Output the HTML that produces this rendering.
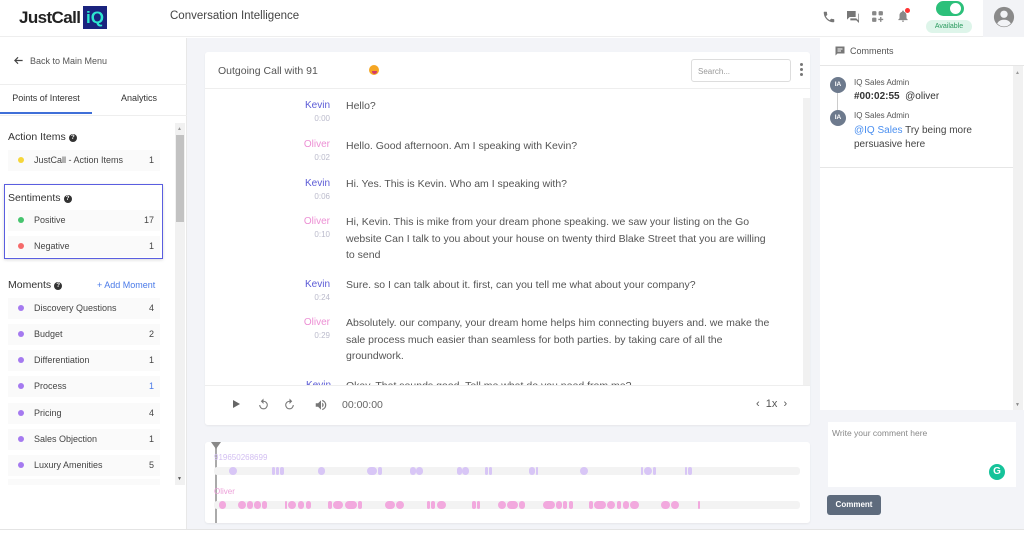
<!DOCTYPE html>
<html><head><meta charset="utf-8"><style>
*{box-sizing:border-box;margin:0;padding:0}
body{width:1024px;height:553px;overflow:hidden;background:#fff;font-family:"Liberation Sans",sans-serif;color:#444;position:relative;font-size:10px}
.a{position:absolute}
.hdr{left:0;top:0;width:1024px;height:37px;background:#fff;border-bottom:1px solid #eee}
.side{left:0;top:38px;width:187px;height:491px;background:#fff;border-right:1px solid #e8e8e8}
.main{left:187px;top:38px;width:632px;height:491px;background:#f3f4f8}
.card{background:#fff;border-radius:3px;box-shadow:0 1px 2px rgba(0,0,0,.06)}
.item{position:absolute;left:8px;width:152px;height:21px;background:#fafafa;font-size:9px;color:#444}
.item .d{position:absolute;left:10px;top:7px;width:6px;height:6px;border-radius:50%}
.item .t{position:absolute;left:26px;top:5px}
.item .n{position:absolute;right:6px;top:5px}
.q{display:inline-block;width:8px;height:8px;border-radius:50%;background:#333;color:#fff;font-size:6px;text-align:center;line-height:8px;font-weight:bold;vertical-align:1px;margin-left:3px}
.nm{position:absolute;right:694px;text-align:right;font-size:10px}
.tm{position:absolute;right:694px;text-align:right;font-size:8px;color:#bbc}
.tx{position:absolute;left:346px;width:430px;font-size:10.5px;color:#555;line-height:16.5px}
.pl{position:absolute;height:8px;border-radius:4px}
</style></head><body>
<div class="a hdr">
  <div class="a" style="left:19px;top:8px;font-size:17px;font-weight:bold;color:#222;letter-spacing:-.6px">JustCall</div>
  <div class="a" style="left:83px;top:6px;width:24px;height:23px;background:#1a237e;color:#2ee6d0;font-weight:bold;font-size:17px;text-align:center;line-height:23px">iQ</div>
  <div class="a" style="left:170px;top:10px;font-size:11.5px;color:#444">Conversation Intelligence</div>
  <svg class="a" style="left:822px;top:10px" width="14" height="14" viewBox="0 0 24 24"><path d="M6.6 10.8c1.4 2.8 3.8 5.1 6.6 6.6l2.2-2.2c.3-.3.7-.4 1-.2 1.1.4 2.3.6 3.6.6.6 0 1 .4 1 1V20c0 .6-.4 1-1 1C10.6 21 3 13.4 3 4c0-.6.4-1 1-1h3.5c.6 0 1 .4 1 1 0 1.3.2 2.5.6 3.6.1.3 0 .7-.2 1z" fill="#777"/></svg>
  <svg class="a" style="left:845px;top:9px" width="16" height="16" viewBox="0 0 24 24"><path d="M3 3h13v9H7l-4 4zM8 14h9l3 3V7h1v14l-4-4H8z" fill="#777"/></svg>
  <svg class="a" style="left:871px;top:10px" width="13" height="13" viewBox="0 0 24 24"><rect x="2" y="2" width="8" height="8" rx="2" fill="#888"/><rect x="14" y="2" width="8" height="8" rx="2" fill="#888"/><rect x="2" y="14" width="8" height="8" rx="2" fill="#888"/><path d="M18 13v9M13.5 17.5h9" stroke="#888" stroke-width="2.5"/></svg>
  <svg class="a" style="left:896px;top:9px" width="14" height="14" viewBox="0 0 24 24"><path d="M12 22a2 2 0 0 0 2-2h-4a2 2 0 0 0 2 2zm6-6V11c0-3-1.6-5.6-4.5-6.3V4a1.5 1.5 0 0 0-3 0v.7C7.6 5.4 6 8 6 11v5l-2 2v1h16v-1z" fill="#888"/></svg>
  <div class="a" style="left:905px;top:8px;width:5px;height:5px;border-radius:50%;background:#f33"></div>
  <div class="a" style="left:936px;top:1px;width:28px;height:15px;border-radius:8px;background:#2cc07a"></div>
  <div class="a" style="left:950px;top:3px;width:11px;height:11px;border-radius:50%;background:#fff"></div>
  <div class="a" style="left:926px;top:20px;width:46px;height:13px;border-radius:7px;background:#def5ea;color:#2a9a5e;font-size:7px;text-align:center;line-height:13px">Available</div>
  <div class="a" style="left:983px;top:0;width:41px;height:37px;background:#f2f3f6"></div>
  <svg class="a" style="left:993px;top:6px" width="22" height="22" viewBox="0 0 24 24"><circle cx="12" cy="12" r="11" fill="#8a8a8a"/><circle cx="12" cy="9" r="4" fill="#f2f3f6"/><path d="M4.5 19c2-3 4.5-4 7.5-4s5.5 1 7.5 4a10 10 0 0 1-15 0z" fill="#f2f3f6"/></svg>
</div>

<div class="a side">
  <svg class="a" style="left:13px;top:17px" width="11" height="11" viewBox="0 0 24 24"><path d="M21 12H5M11 5l-7 7 7 7" stroke="#444" stroke-width="2.5" fill="none"/></svg>
  <div class="a" style="left:30px;top:18px;font-size:9px;color:#555">Back to Main Menu</div>
  <div class="a" style="left:0;top:46px;width:187px;height:1px;background:#eee"></div>
  <div class="a" style="left:0;top:47px;width:92px;height:29px;border-bottom:2px solid #3f6fd8;font-size:9px;text-align:center;line-height:27px;color:#333">Points of Interest</div>
  <div class="a" style="left:92px;top:47px;width:94px;height:29px;font-size:9px;text-align:center;line-height:27px;color:#333">Analytics</div>
  <div class="a" style="left:0;top:77px;width:187px;height:1px;background:#eee"></div>
  <div class="a" style="left:175px;top:85px;width:10px;height:362px;background:#f1f1f1"></div>
  <div class="a" style="left:176px;top:97px;width:8px;height:87px;background:#c2c2c2"></div>
  <div class="a" style="left:177px;top:88px;font-size:5px;color:#999">▲</div>
  <div class="a" style="left:177px;top:438px;font-size:5px;color:#555">▼</div>

  <div class="a" style="left:8px;top:93px;font-size:10.5px;color:#333">Action Items<span class="q">?</span></div>
  <div class="item" style="top:112px"><span class="d" style="background:#f5d63a"></span><span class="t">JustCall - Action Items</span><span class="n">1</span></div>

  <div class="a" style="left:4px;top:146px;width:159px;height:75px;border:1px solid #5a5ee0;box-shadow:0 1px 3px rgba(0,0,0,.15)"></div>
  <div class="a" style="left:8px;top:154px;font-size:10.5px;color:#333">Sentiments<span class="q">?</span></div>
  <div class="item" style="top:172px"><span class="d" style="background:#46c46e"></span><span class="t">Positive</span><span class="n">17</span></div>
  <div class="item" style="top:198px"><span class="d" style="background:#f56a6a"></span><span class="t">Negative</span><span class="n">1</span></div>

  <div class="a" style="left:8px;top:241px;font-size:10.5px;color:#333">Moments<span class="q">?</span></div>
  <div class="a" style="left:97px;top:242px;font-size:9px;color:#4a7ae8">+ Add Moment</div>
  <div class="item" style="top:260px"><span class="d" style="background:#a57af0"></span><span class="t">Discovery Questions</span><span class="n">4</span></div>
  <div class="item" style="top:286px"><span class="d" style="background:#a57af0"></span><span class="t">Budget</span><span class="n">2</span></div>
  <div class="item" style="top:312px"><span class="d" style="background:#a57af0"></span><span class="t">Differentiation</span><span class="n">1</span></div>
  <div class="item" style="top:338px"><span class="d" style="background:#a57af0"></span><span class="t">Process</span><span class="n" style="color:#4a7ae8">1</span></div>
  <div class="item" style="top:365px"><span class="d" style="background:#a57af0"></span><span class="t">Pricing</span><span class="n">4</span></div>
  <div class="item" style="top:391px"><span class="d" style="background:#a57af0"></span><span class="t">Sales Objection</span><span class="n">1</span></div>
  <div class="item" style="top:417px"><span class="d" style="background:#a57af0"></span><span class="t">Luxury Amenities</span><span class="n">5</span></div>
  <div class="item" style="top:441px;height:6px"></div>
</div>

<div class="a main"></div>
<div class="a card" style="left:205px;top:52px;width:605px;height:373px;overflow:hidden">
  <div class="a" style="left:13px;top:13px;font-size:10.5px;color:#555">Outgoing Call with 91</div>
  <div class="a" style="left:164px;top:13px;width:10px;height:10px;border-radius:50%;background:#f5a623"></div>
  <div class="a" style="left:167px;top:19px;width:5px;height:3px;border-radius:0 0 3px 3px;background:#d2386c"></div>
  <div class="a" style="left:486px;top:7px;width:100px;height:23px;border:1px solid #ddd;border-radius:3px;font-size:8px;color:#999;padding:7px 0 0 6px">Search...</div>
  <div class="a" style="left:595px;top:11px;width:3px;height:3px;background:#777;border-radius:50%;box-shadow:0 5px 0 #777,0 10px 0 #777"></div>
  <div class="a" style="left:0;top:36px;width:605px;height:1px;background:#eee"></div>
  <div class="a" style="left:598px;top:46px;width:7px;height:290px;background:#f1f1f1"></div>
  <div class="a" style="left:0;top:333px;width:605px;height:40px;background:#fff;border-top:1px solid #eee"></div>
</div>
<div class="a" style="left:0;top:0;width:1024px;height:0">
  <div class="nm" style="top:100px;color:#5b5bd6">Kevin</div><div class="tm" style="top:114px">0:00</div>
  <div class="tx" style="top:98px">Hello?</div>
  <div class="nm" style="top:139px;color:#ec8fd4">Oliver</div><div class="tm" style="top:153px">0:02</div>
  <div class="tx" style="top:138px">Hello. Good afternoon. Am I speaking with Kevin?</div>
  <div class="nm" style="top:178px;color:#5b5bd6">Kevin</div><div class="tm" style="top:192px">0:06</div>
  <div class="tx" style="top:176px">Hi. Yes. This is Kevin. Who am I speaking with?</div>
  <div class="nm" style="top:216px;color:#ec8fd4">Oliver</div><div class="tm" style="top:230px">0:10</div>
  <div class="tx" style="top:214px">Hi, Kevin. This is mike from your dream phone speaking. we saw your listing on the Go website Can I talk to you about your house on twenty third Blake Street that you are willing to send</div>
  <div class="nm" style="top:279px;color:#5b5bd6">Kevin</div><div class="tm" style="top:293px">0:24</div>
  <div class="tx" style="top:277px">Sure. so I can talk about it. first, can you tell me what about your company?</div>
  <div class="nm" style="top:317px;color:#ec8fd4">Oliver</div><div class="tm" style="top:331px">0:29</div>
  <div class="tx" style="top:315px">Absolutely. our company, your dream home helps him connecting buyers and. we make the sale process much easier than seamless for both parties. by taking care of all the groundwork.</div>
</div>
<div class="a" style="left:205px;top:379px;width:590px;height:6px;overflow:hidden">
  <div class="a" style="left:101px;top:1px;font-size:10px;color:#5b5bd6">Kevin</div>
  <div class="a" style="left:141px;top:1px;font-size:10.5px;color:#555">Okay. That sounds good. Tell me what do you need from me?</div>
</div>
<div class="a" style="left:233px;top:400px;width:0;height:0;border-left:7px solid #666;border-top:4px solid transparent;border-bottom:4px solid transparent"></div>
<svg class="a" style="left:257px;top:398px" width="13" height="13" viewBox="0 0 24 24"><path d="M12 5V1L7 6l5 5V7a6 6 0 1 1-6 6H4a8 8 0 1 0 8-8z" fill="#777"/></svg>
<svg class="a" style="left:283px;top:398px" width="13" height="13" viewBox="0 0 24 24"><path d="M12 5V1l5 5-5 5V7a6 6 0 1 0 6 6h2a8 8 0 1 1-8-8z" fill="#777"/></svg>
<svg class="a" style="left:314px;top:398px" width="14" height="14" viewBox="0 0 24 24"><path d="M3 9v6h4l5 5V4L7 9zm13.5 3A4.5 4.5 0 0 0 14 8v8a4.5 4.5 0 0 0 2.5-4zM14 3.2v2.1a7 7 0 0 1 0 13.4v2.1a9 9 0 0 0 0-17.6z" fill="#777"/></svg>
<div class="a" style="left:342px;top:399px;font-size:10.5px;color:#666">00:00:00</div>
<div class="a" style="left:756px;top:398px;font-size:11px;color:#555">‹&nbsp; 1x &nbsp;›</div>

<div class="a card" style="left:205px;top:442px;width:605px;height:81px"></div>
<div class="a" style="left:215px;top:447px;width:2px;height:76px;background:#aaa"></div>
<div class="a" style="left:211px;top:442px;width:0;height:0;border-top:7px solid #888;border-left:5px solid transparent;border-right:5px solid transparent"></div>
<div class="a" style="left:214px;top:453px;font-size:8px;color:#d3bff2">919650268699</div>
<div class="a" style="left:214px;top:487px;font-size:8px;color:#ec9fd8">Oliver</div>
<div class="a" style="left:214px;top:467px;width:586px;height:8px;background:#f3f3f3;border-radius:3px"></div>
<div class="a" style="left:214px;top:501px;width:586px;height:8px;background:#f3f3f3;border-radius:3px"></div>
<div class="a" style="left:0;top:467px">
<div class="pl" style="left:229px;width:8px;background:#d8c6f6"></div><div class="pl" style="left:272px;width:3px;background:#d8c6f6"></div><div class="pl" style="left:276px;width:3px;background:#d8c6f6"></div><div class="pl" style="left:280px;width:4px;background:#d8c6f6"></div><div class="pl" style="left:318px;width:7px;background:#d8c6f6"></div><div class="pl" style="left:367px;width:10px;background:#d8c6f6"></div><div class="pl" style="left:378px;width:4px;background:#d8c6f6"></div><div class="pl" style="left:410px;width:6px;background:#d8c6f6"></div><div class="pl" style="left:416px;width:7px;background:#d8c6f6"></div><div class="pl" style="left:457px;width:5px;background:#d8c6f6"></div><div class="pl" style="left:462px;width:7px;background:#d8c6f6"></div><div class="pl" style="left:485px;width:3px;background:#d8c6f6"></div><div class="pl" style="left:489px;width:3px;background:#d8c6f6"></div><div class="pl" style="left:529px;width:6px;background:#d8c6f6"></div><div class="pl" style="left:536px;width:2px;background:#d8c6f6"></div><div class="pl" style="left:580px;width:8px;background:#d8c6f6"></div><div class="pl" style="left:641px;width:2px;background:#d8c6f6"></div><div class="pl" style="left:644px;width:8px;background:#d8c6f6"></div><div class="pl" style="left:653px;width:3px;background:#d8c6f6"></div><div class="pl" style="left:685px;width:2px;background:#d8c6f6"></div><div class="pl" style="left:688px;width:4px;background:#d8c6f6"></div>
</div>
<div class="a" style="left:0;top:501px">
<div class="pl" style="left:219px;width:7px;background:#f2a9de"></div><div class="pl" style="left:238px;width:8px;background:#f2a9de"></div><div class="pl" style="left:247px;width:6px;background:#f2a9de"></div><div class="pl" style="left:254px;width:7px;background:#f2a9de"></div><div class="pl" style="left:262px;width:5px;background:#f2a9de"></div><div class="pl" style="left:285px;width:2px;background:#f2a9de"></div><div class="pl" style="left:288px;width:8px;background:#f2a9de"></div><div class="pl" style="left:298px;width:6px;background:#f2a9de"></div><div class="pl" style="left:306px;width:5px;background:#f2a9de"></div><div class="pl" style="left:328px;width:4px;background:#f2a9de"></div><div class="pl" style="left:333px;width:10px;background:#f2a9de"></div><div class="pl" style="left:345px;width:12px;background:#f2a9de"></div><div class="pl" style="left:358px;width:4px;background:#f2a9de"></div><div class="pl" style="left:385px;width:10px;background:#f2a9de"></div><div class="pl" style="left:396px;width:8px;background:#f2a9de"></div><div class="pl" style="left:427px;width:3px;background:#f2a9de"></div><div class="pl" style="left:431px;width:4px;background:#f2a9de"></div><div class="pl" style="left:437px;width:9px;background:#f2a9de"></div><div class="pl" style="left:472px;width:4px;background:#f2a9de"></div><div class="pl" style="left:477px;width:3px;background:#f2a9de"></div><div class="pl" style="left:498px;width:8px;background:#f2a9de"></div><div class="pl" style="left:507px;width:11px;background:#f2a9de"></div><div class="pl" style="left:519px;width:6px;background:#f2a9de"></div><div class="pl" style="left:543px;width:12px;background:#f2a9de"></div><div class="pl" style="left:556px;width:6px;background:#f2a9de"></div><div class="pl" style="left:563px;width:4px;background:#f2a9de"></div><div class="pl" style="left:569px;width:4px;background:#f2a9de"></div><div class="pl" style="left:589px;width:4px;background:#f2a9de"></div><div class="pl" style="left:594px;width:12px;background:#f2a9de"></div><div class="pl" style="left:607px;width:8px;background:#f2a9de"></div><div class="pl" style="left:617px;width:4px;background:#f2a9de"></div><div class="pl" style="left:623px;width:6px;background:#f2a9de"></div><div class="pl" style="left:630px;width:9px;background:#f2a9de"></div><div class="pl" style="left:661px;width:9px;background:#f2a9de"></div><div class="pl" style="left:671px;width:8px;background:#f2a9de"></div><div class="pl" style="left:698px;width:2px;background:#f2a9de"></div>
</div>

<div class="a" style="left:819px;top:38px;width:205px;height:491px;background:#f3f4f8"></div>
<div class="a" style="left:820px;top:38px;width:204px;height:372px;background:#fff"></div>
<svg class="a" style="left:834px;top:45px" width="12" height="12" viewBox="0 0 24 24"><path d="M3 3h18v14H7l-4 4z" fill="#777"/><path d="M7 8h10M7 12h7" stroke="#fff" stroke-width="2"/></svg>
<div class="a" style="left:850px;top:46px;font-size:9px;color:#555">Comments</div>
<div class="a" style="left:820px;top:65px;width:204px;height:1px;background:#e6e6e6"></div>
<div class="a" style="left:1013px;top:66px;width:10px;height:344px;background:#f1f1f1"></div>
<div class="a" style="left:1015px;top:70px;font-size:5px;color:#999">▲</div>
<div class="a" style="left:1015px;top:402px;font-size:5px;color:#888">▼</div>
<div class="a" style="left:837px;top:88px;width:1px;height:28px;background:#ccc"></div>
<div class="a" style="left:830px;top:77px;width:16px;height:16px;border-radius:50%;background:#6d7a8d;color:#fff;font-size:6.5px;font-weight:bold;text-align:center;line-height:16px">IA</div>
<div class="a" style="left:830px;top:110px;width:16px;height:16px;border-radius:50%;background:#6d7a8d;color:#fff;font-size:6.5px;font-weight:bold;text-align:center;line-height:16px">IA</div>
<div class="a" style="left:854px;top:78px;font-size:8px;color:#555">IQ Sales Admin</div>
<div class="a" style="left:854px;top:91px;font-size:10px;color:#333"><b style="font-weight:bold">#00:02:55</b>&nbsp; @oliver</div>
<div class="a" style="left:854px;top:111px;font-size:8px;color:#555">IQ Sales Admin</div>
<div class="a" style="left:854px;top:124px;width:150px;font-size:10px;color:#444;line-height:14px"><span style="color:#4a8ff0">@IQ Sales</span> Try being more persuasive here</div>
<div class="a" style="left:820px;top:167px;width:193px;height:1px;background:#e6e6e6"></div>
<div class="a" style="left:828px;top:422px;width:188px;height:65px;background:#fff;font-size:8.5px;color:#888;padding:6px 0 0 4px">Write your comment here</div>
<div class="a" style="left:989px;top:464px;width:16px;height:16px;border-radius:50%;background:#15c39a;color:#fff;font-size:10px;font-weight:bold;text-align:center;line-height:16px">G</div>
<div class="a" style="left:827px;top:495px;width:54px;height:20px;border-radius:3px;background:#5e6b7d;color:#fff;font-size:8px;font-weight:bold;text-align:center;line-height:20px">Comment</div>
<div class="a" style="left:0;top:529px;width:1024px;height:1px;background:#e4e4e4"></div>
</body></html>
